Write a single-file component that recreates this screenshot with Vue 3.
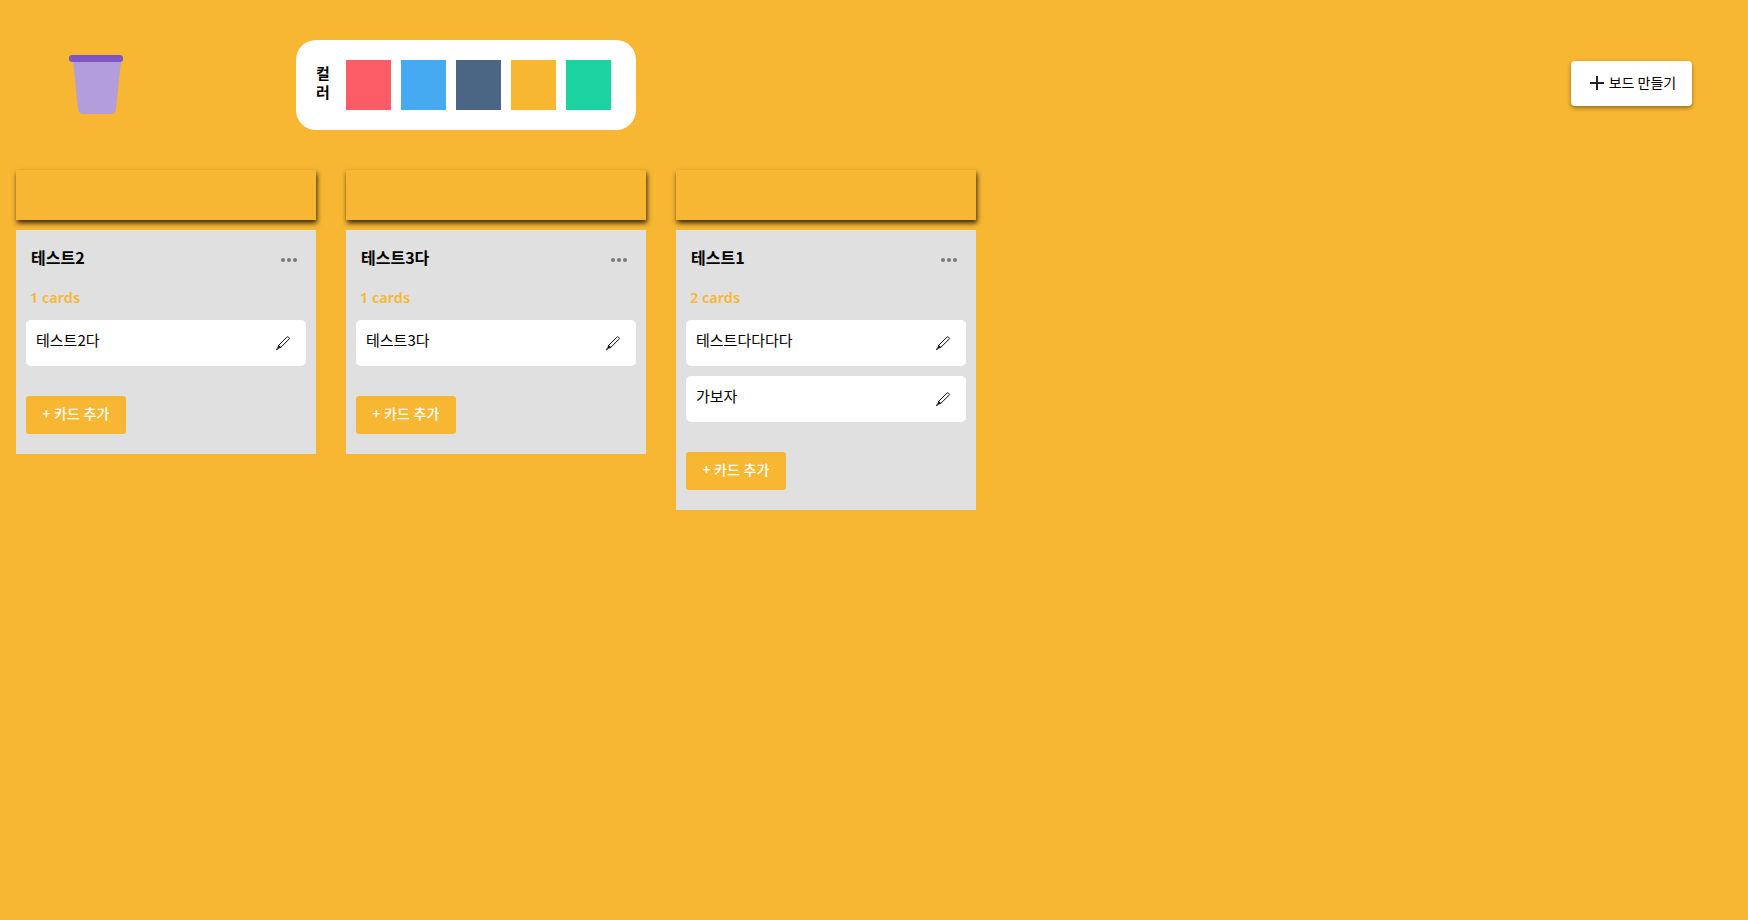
<script setup>
const colors = ['#fc5c65', '#45aaf2', '#4b6584', '#f7b731', '#1ad3a0'];

const boards = [
  { title: '테스트2', cards: ['테스트2다'] },
  { title: '테스트3다', cards: ['테스트3다'] },
  { title: '테스트1', cards: ['테스트다다다다', '가보자'] },
];
</script>

<template>
  <div class="page">
    <header class="top">
      <div class="trash">
        <svg width="54" height="60" viewBox="0 0 54 60">
          <path d="M4 6h48l-5 48a5 5 0 0 1-5 5H14a5 5 0 0 1-5-5z" fill="#b39ddb" />
          <rect x="0" y="0" width="54" height="7" rx="3" fill="#7e57c2" />
        </svg>
      </div>
      <div class="palette">
        <span class="palette-label">컬러</span>
        <span v-for="c in colors" :key="c" class="swatch" :style="{ background: c }" />
      </div>
      <button class="add-board">
        <svg width="16" height="16" viewBox="0 0 16 16">
          <path d="M8 1v14M1 8h14" stroke="#222" stroke-width="2" fill="none" />
        </svg>
        <span>보드 만들기</span>
      </button>
    </header>

    <main class="boards">
      <section v-for="b in boards" :key="b.title" class="board">
        <div class="board-head" />
        <div class="list">
          <div class="list-title">
            <h2>{{ b.title }}</h2>
            <span class="dots"><i /><i /><i /></span>
          </div>
          <p class="count">{{ b.cards.length }} cards</p>
          <div v-for="c in b.cards" :key="c" class="card">
            <span>{{ c }}</span>
            <svg width="16" height="16" viewBox="0 0 16 16" fill="none" stroke="#111" stroke-width="1">
              <path d="M3.6 10.4 11.8 2.2a1.2 1.2 0 0 1 1.7 0l.4.4a1.2 1.2 0 0 1 0 1.7L5.7 12.5z" />
              <path d="M3.6 10.4 2.8 13.3 5.7 12.5z" fill="#111" />
              <path d="M2.6 13.5 1.4 14.7" stroke-width="1.4" />
            </svg>
          </div>
          <button class="add-card">+ 카드 추가</button>
        </div>
      </section>
    </main>
  </div>
</template>

<style>
body {
  margin: 0;
}
</style>

<style scoped>
.page {
  height: 920px;
  background: #f8b733;
  font-family: "Noto Sans CJK KR", "Noto Sans", sans-serif;
  color: #000;
  overflow: hidden;
}

.top {
  display: flex;
  align-items: flex-start;
  height: 170px;
  padding: 40px 56px 0 69px;
  box-sizing: border-box;
}

.trash {
  width: 54px;
  height: 60px;
  margin-top: 15px;
  margin-right: 173px;
}

.palette {
  display: flex;
  align-items: center;
  gap: 10px;
  width: 340px;
  height: 90px;
  box-sizing: border-box;
  padding: 0 25px 0 17px;
  background: #fff;
  border-radius: 20px;
}

.palette-label {
  width: 20px;
  margin-right: 3px;
  margin-top: -6px;
  font-size: 15px;
  font-weight: 700;
  line-height: 19px;
  text-align: center;
}

.swatch {
  width: 45px;
  height: 50px;
}

.add-board {
  display: flex;
  align-items: center;
  justify-content: center;
  gap: 4px;
  width: 121px;
  height: 45px;
  margin-top: 21px;
  margin-left: auto;
  padding: 0 0 2px 2px;
  border: 0;
  border-radius: 4px;
  background: #fff;
  box-shadow: 0 2px 4px rgba(0, 0, 0, 0.4);
  font-family: inherit;
  font-size: 14px;
  font-weight: 400;
  color: #000;
}

.add-board span {
  margin-top: -2px;
}

.boards {
  display: flex;
  align-items: flex-start;
  gap: 30px;
  padding-left: 16px;
}

.board {
  width: 300px;
}

.board-head {
  height: 50px;
  margin-bottom: 10px;
  background: #f8b733;
  box-shadow: 1px 3px 5px rgba(0, 0, 0, 0.8);
}

.list {
  padding: 10px 10px 20px;
  background: #e0e0e0;
}

.list-title {
  display: flex;
  align-items: center;
  justify-content: space-between;
  height: 36px;
  padding: 0 9px 0 5px;
}

.list-title h2 {
  margin: 0;
  margin-top: -2px;
  font-size: 16px;
  font-weight: 700;
}

.dots {
  display: flex;
  gap: 2px;
  margin-top: 4px;
}

.dots i {
  width: 4px;
  height: 4px;
  border-radius: 50%;
  background: #777;
}

.count {
  margin: 8px 0 10px 4px;
  font-family: "Noto Sans", sans-serif;
  font-size: 14.5px;
  font-weight: 600;
  line-height: 26px;
  color: #f8b733;
}

.card {
  display: flex;
  align-items: center;
  justify-content: space-between;
  height: 46px;
  box-sizing: border-box;
  padding: 0 15px 0 10px;
  margin-bottom: 10px;
  background: #fff;
  border-radius: 5px;
  font-size: 15px;
  color: #000;
}

.card span {
  margin-top: -7px;
}

.add-card {
  display: block;
  width: 100px;
  height: 38px;
  margin-top: 30px;
  padding: 0 0 4px;
  border: 0;
  border-radius: 3px;
  background: #f8b733;
  color: #fff;
  font-family: inherit;
  font-size: 14px;
  font-weight: 500;
  letter-spacing: 0.2px;
}
</style>
